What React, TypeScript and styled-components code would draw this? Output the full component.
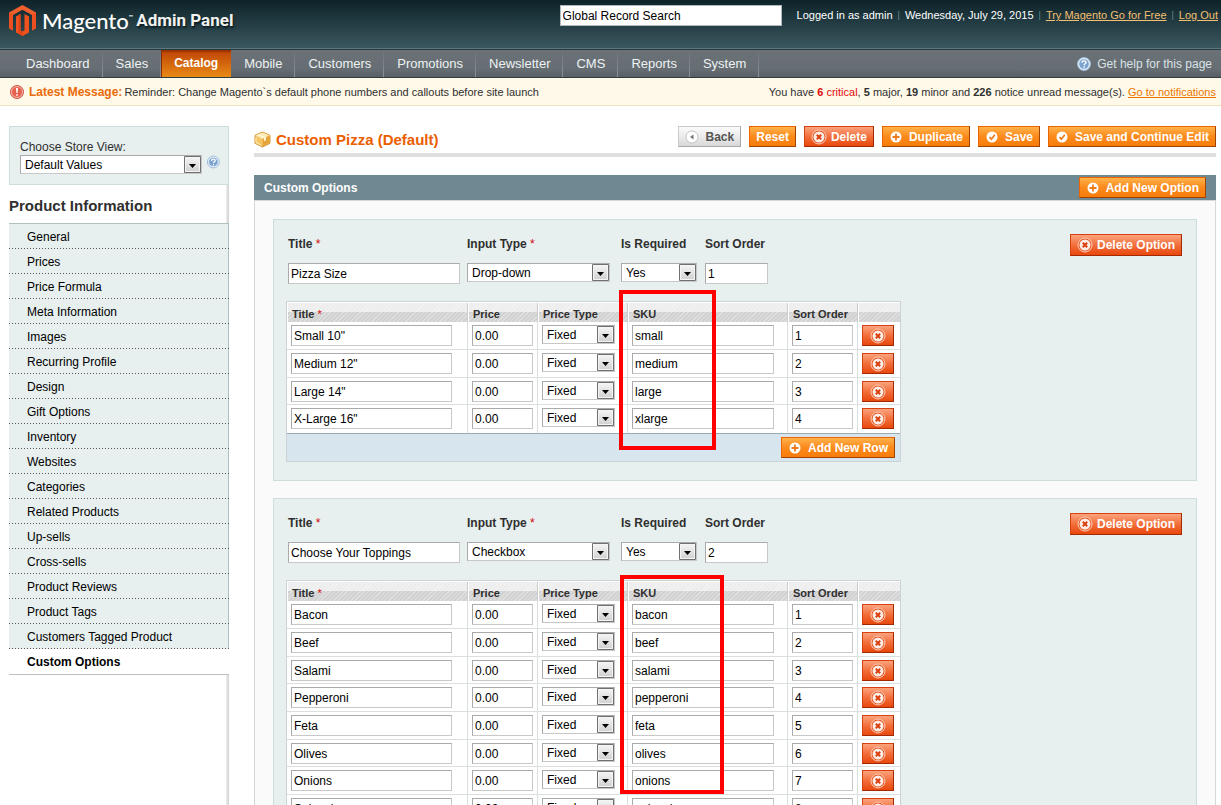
import React from "react";
import styled, { createGlobalStyle, css } from "styled-components";

const Global = createGlobalStyle`
  * { box-sizing: border-box; }
  html, body { margin: 0; padding: 0; }
  body {
    background: #fff;
    color: #2f2f2f;
    font: 12px/16px "Liberation Sans", Arial, Helvetica, sans-serif;
  }
  input, select, button { font: inherit; margin: 0; }
`;

const Page = styled.div`
  display: flex;
  flex-direction: column;
  height: 100vh;
  overflow: hidden;
`;

/* ---------- Header ---------- */
const Header = styled.header`
  display: flex;
  justify-content: space-between;
  align-items: flex-start;
  flex: 0 0 50px;
  padding: 5px 3px 0 9px;
  background: linear-gradient(#0d2329, #3c5860);
  border-bottom: 1px solid #27393f;
  box-shadow: inset 0 -1px 0 #5c7780;
`;
const Logo = styled.h1`
  display: flex;
  align-items: center;
  margin: 0;
  height: 31px;
  color: #fff;
  font-weight: normal;
`;
const Brand = styled.span`
  margin-left: 6px;
  font: 500 22px/31px Lato, sans-serif;
  sup { font-size: 6px; line-height: 6px; vertical-align: 10px; }
`;
const Product = styled.span`
  margin-left: 3px;
  font: bold 17px/31px Roboto, sans-serif;
  color: #f2f2f0;
  text-shadow: 1px 2px 2px #0a1a1f;
`;
const HeaderRight = styled.div`
  display: flex;
  align-items: flex-start;
  font-size: 11px;
  color: #fff;
`;
const Search = styled.input`
  width: 222px;
  height: 21px;
  margin-right: 15px;
  padding: 0 2px;
  border: 1px solid #b0b8bb;
  font-size: 12px;
  color: #000;
`;
const Account = styled.div`
  display: flex;
  line-height: 20px;
  a { color: #f3bf72; }
  > * + * { display: flex; }
  > * + *::before { content: "|"; margin: 0 5px; color: #6f8992; font-size: 9px; }
`;

/* ---------- Navigation ---------- */
const NavBar = styled.div`
  display: flex;
  justify-content: space-between;
  flex: 0 0 28px;
  padding: 0 9px 0 13px;
  background: linear-gradient(#6b7177, #666e73 70%, #5a6065);
  border-bottom: 1px solid #303c40;
`;
const Nav = styled.nav`
  display: flex;
`;
const NavLink = styled.a<{ $active?: boolean }>`
  padding: 0 13px;
  color: #eef2f3;
  font-size: 13px;
  line-height: 27px;
  text-decoration: none;
  background: linear-gradient(transparent, #8f969b) right / 1px 100% no-repeat;
  ${(p) => p.$active && css`
    font-size: 12px;
    font-weight: bold;
    color: #fff;
    background: linear-gradient(#8c2b00, #c24a06 3px, #e98a16);
    box-shadow: inset 1px 0 0 #8c2b00;
  `}
`;
const HelpLink = styled.a`
  display: flex;
  align-items: center;
  gap: 6px;
  color: #d9e2e6;
  text-decoration: none;
`;

/* ---------- Notification bar ---------- */
const Notice = styled.div`
  display: flex;
  justify-content: space-between;
  align-items: center;
  flex: 0 0 28px;
  padding: 0 5px 0 10px;
  background: #fff9e9;
  border-bottom: 1px solid #eee2be;
  font-size: 11px;
  a { color: #ea7601; }
`;
const Latest = styled.div`
  display: flex;
  align-items: center;
  b { margin: 0 2px 0 5px; font-size: 12px; color: #ea6b0a; }
`;
const Critical = styled.span`
  color: #df0a0a;
`;

/* ---------- Columns ---------- */
const Columns = styled.div`
  display: flex;
  flex: 1;
  min-height: 0;
  padding: 20px 5px 0 9px;
`;
const Sidebar = styled.aside`
  flex: 0 0 220px;
  margin-right: 25px;
  background: linear-gradient(to right, #f0f0f0, #d0d0d0) right / 3px 100% no-repeat;
`;
const StoreBox = styled.div`
  height: 59px;
  padding: 13px 8px 0 10px;
  border: 1px solid #cddddd;
  background: #e7efef;
`;
const StoreRow = styled.div`
  display: flex;
  gap: 5px;
`;
const StoreLabel = styled.label`
  display: block;
  line-height: 15px;
`;
const SideTitle = styled.h2`
  margin: 0 3px 0 0;
  height: 38px;
  font-size: 15px;
  line-height: 42px;
  background: #fff;
`;
const TabList = styled.ul`
  margin: 0;
  padding: 0;
  list-style: none;
  border-top: 1px solid #b0bfc0;
  border-bottom: 1px solid #bebebe;
`;
const Tab = styled.a<{ $active?: boolean }>`
  display: block;
  height: 25px;
  padding: 1px 0 0 18px;
  line-height: 25px;
  color: #000;
  text-decoration: none;
  background:
    linear-gradient(to right, #555 1px, transparent 1px) bottom left / 3px 1px repeat-x,
    linear-gradient(#a9c2c4, #a9c2c4) right / 1px 100% no-repeat,
    #e7efef;
  ${(p) => p.$active && css`
    font-weight: bold;
    background: #fff;
  `}
`;

/* ---------- Main ---------- */
const Main = styled.main`
  flex: 1;
  min-width: 0;
`;
const TitleBar = styled.div`
  display: flex;
  justify-content: space-between;
  align-items: flex-start;
  height: 31px;
  margin-bottom: 18px;
  border-bottom: 4px solid #dfdfdf;
`;
const Title = styled.h2`
  display: flex;
  align-items: center;
  gap: 5px;
  margin: 0;
  font-size: 15px;
  line-height: 27px;
  color: #eb5e00;
`;
const Buttons = styled.div`
  display: flex;
  gap: 8px;
`;
const tones = {
  add: ["#ffb24a", "#fb8a1c", "#f77c0a", "#ed6502", "#a04300", "#fff"],
  remove: ["#fba37d", "#f26f3b", "#e8480e", "#d74111", "#a22a03", "#fff"],
  back: ["#fbfbfb", "#ebebeb", "#d8d8d8", "#c9c9c9", "#a8a8a8", "#555"],
};
const Btn = styled.button<{ $tone?: keyof typeof tones }>`
  display: inline-flex;
  align-items: center;
  gap: 4px;
  height: 21px;
  padding: 0 6px;
  white-space: nowrap;
  font-weight: bold;
  ${(p) => {
    const t = tones[p.$tone ?? "add"];
    return css`
      color: ${t[5]};
      background: linear-gradient(${t[0]}, ${t[1]} 50%, ${t[2]});
      border: 1px solid;
      border-color: ${t[3]} ${t[4]} ${t[4]} ${t[3]};
    `;
  }}
`;
const DeleteOption = styled(Btn)`
  height: 22px;
`;
const IconBtn = styled(Btn)`
  display: flex;
  justify-content: center;
  width: 32px;
  padding: 0;
`;
const PanelHead = styled.div`
  display: flex;
  justify-content: space-between;
  align-items: center;
  height: 25px;
  padding: 0 10px;
  background: #6f8992;
  color: #fff;
  h3 { margin: 0; font-size: 12px; }
`;
const Panel = styled.div`
  display: flex;
  flex-direction: column;
  gap: 17px;
  padding: 18px;
  border: 1px solid #d6d6d6;
  background: #fafafa;
`;
const Option = styled.section`
  padding: 14px 14px 18px 12px;
  border: 1px solid #cddddd;
  background: #e7efef;
`;
const OptionHead = styled.div`
  display: flex;
  justify-content: space-between;
  align-items: flex-start;
  padding-left: 2px;
  margin-bottom: 17px;
`;
const Fields = styled.div`
  display: flex;
`;
const Field = styled.div<{ $w: number; $gap: number }>`
  width: ${(p) => p.$w}px;
  margin-right: ${(p) => p.$gap}px;
  label {
    display: block;
    margin-bottom: 9px;
    line-height: 20px;
    font-weight: bold;
    white-space: nowrap;
  }
`;
const Star = styled.span`
  color: #d40707;
  font-weight: normal;
`;
const TextBox = styled.input`
  display: block;
  width: 100%;
  height: 21px;
  padding: 0 2px;
  border: 1px solid;
  border-color: #aaa #c8c8c8 #c8c8c8 #aaa;
  border-radius: 0;
  background: #fff;
  color: #000;
`;
const SelectWrap = styled.span`
  position: relative;
  display: block;
  width: 100%;
  svg { position: absolute; right: 1px; top: 1px; pointer-events: none; }
`;
const NativeSelect = styled.select`
  appearance: none;
  display: block;
  width: 100%;
  height: 19px;
  padding: 0 18px 0 4px;
  border: 1px solid;
  border-color: #aaa #c8c8c8 #c8c8c8 #aaa;
  border-radius: 0;
  background: #fff;
  color: #000;
`;

/* ---------- Value grid ---------- */
const GridWrap = styled.div`
  position: relative;
  width: 615px;
`;
const Grid = styled.table`
  width: 100%;
  table-layout: fixed;
  border-collapse: separate;
  border-spacing: 0;
  border: 1px solid #cbd3d4;
  background: #fff;
  th {
    height: 20px;
    padding: 2px 0 0 4px;
    font-size: 11px;
    line-height: 16px;
    text-align: left;
    border: solid #fff;
    border-width: 1px 0 0 1px;
    box-shadow: inset -1px 0 0 #c8cccd;
    background:
      linear-gradient(#fff9 50%, transparent 50%),
      repeating-linear-gradient(135deg, #dfdfdf 0 1px, #d2d2d2 1px 3px);
  }
  td {
    height: 28px;
    padding: 3px 0 0 4px;
    vertical-align: top;
    border: solid #dadfe0;
    border-width: 0 1px 1px 0;
  }
  th:last-child, td:last-child { border-right: 0; box-shadow: none; }
  tbody tr:nth-child(3n) td { height: 27px; }
  tfoot td {
    height: 28px;
    padding: 3px 5px 0;
    border: 0;
    border-top: 1px solid #9babb0;
    background: #d7e5ef;
  }
  tbody tr:last-child td { border-bottom: 0; }
`;
const Cell = styled.div<{ $w: number }>`
  width: ${(p) => p.$w}px;
`;
const FootRight = styled.div`
  display: flex;
  justify-content: flex-end;
`;
const Highlight = styled.div<{ $x: number; $y: number; $w: number; $h: number }>`
  position: absolute;
  left: ${(p) => p.$x}px;
  top: ${(p) => p.$y}px;
  width: ${(p) => p.$w}px;
  height: ${(p) => p.$h}px;
  border: 4px solid #fe0000;
  pointer-events: none;
`;

/* ---------- Icons ---------- */
const MagentoMark = () => (
  <svg width="27" height="31" viewBox="0 0 27 31" aria-hidden="true">
    <path d="M13.5 0 27 7.6v15.6l-4 2.3V10L13.5 4.7 4 10v15.5l-4-2.3V7.6z" fill="#f1602c" />
    <path d="M0 7.6 4 10v15.5l-4-2.3zM27 7.6 23 10v15.500l4-2.300z" fill="#ee4f20" />
    <path d="M7 11.500 11.500 9v16.200l2 1.200 2-1.200V9l4.500 2.500v16L13.500 31 7 27.500z" fill="#f1501f" />
    <path d="M9.500 10.100 11.500 9v16.200l2 1.200V31l-4-2.200z" fill="#e04417" />
  </svg>
);
const AlertIcon = () => (
  <svg width="14" height="14" viewBox="0 0 14 14" aria-hidden="true">
    <circle cx="7" cy="7" r="6.500" fill="#e5604d" stroke="#cf5a4b" />
    <circle cx="7" cy="7" r="5.500" fill="none" stroke="#f6b8ae" />
    <path d="M6 3h2l-.4 5H6.400zM6.200 9.200h1.600v1.600H6.200z" fill="#fff" />
  </svg>
);
const HelpIcon = () => (
  <svg width="14" height="14" viewBox="0 0 14 14" aria-hidden="true">
    <circle cx="7" cy="7" r="6.500" fill="#e4eff9" stroke="#9ab8d6" />
    <circle cx="7" cy="7" r="4.800" fill="#7aa3cf" />
    <path d="M5 5.800C5 3.200 9.100 3.400 9 5.500 8.900 6.800 7.100 6.700 7.100 8.200M7.100 9.300v1.500" fill="none" stroke="#fff" strokeWidth="1.400" />
  </svg>
);
const BoxIcon = () => (
  <svg width="17" height="17" viewBox="0 0 17 17" aria-hidden="true">
    <path d="M8.500 1 16 4.300v8L8.500 16 1 12.300v-8z" fill="#f5c564" stroke="#d69a3c" />
    <path d="M8.500 1.500 15.500 4.500 8.500 8 1.500 4.500z" fill="#fce8b4" />
    <path d="M8.500 8v7.500l7-3.500V4.500z" fill="#e5a53a" />
    <path d="M5 3 12 6.300v3l-2 1V7.200L3.200 4z" fill="#fff4d4" />
    <path d="M2 6.500v5l5 2.500" fill="none" stroke="#fff0c4" />
  </svg>
);
const DropArrow = () => (
  <svg width="17" height="17" viewBox="0 0 17 17" aria-hidden="true">
    <defs>
      <linearGradient id="arrowFace" x2="0" y2="1">
        <stop stopColor="#f6f6f6" />
        <stop offset="1" stopColor="#cfcfcf" />
      </linearGradient>
    </defs>
    <path d="M.5.5h16v16H.5z" fill="url(#arrowFace)" stroke="#707070" />
    <path d="M1.500 1.500h14v14h-14z" fill="none" stroke="#f4f4f4" />
    <path d="M5 8h7l-3.500 4z" fill="#000" />
  </svg>
);
const CrossIcon = () => (
  <svg width="16" height="16" viewBox="0 0 16 16" aria-hidden="true">
    <circle cx="8" cy="8" r="7" fill="#e8551f" stroke="#fbd0bd" />
    <circle cx="8" cy="8" r="5.500" fill="#fdeee8" />
    <path d="M5.800 5.800l4.400 4.400M10.200 5.800l-4.400 4.400" stroke="#d9400e" strokeWidth="2" />
  </svg>
);
const PlusIcon = () => (
  <svg width="16" height="16" viewBox="0 0 16 16" aria-hidden="true">
    <circle cx="7" cy="8" r="5.500" fill="#fff" />
    <path d="M7 4.500v7M3.500 8h7" stroke="#f07a18" strokeWidth="1.800" />
  </svg>
);
const CheckIcon = () => (
  <svg width="16" height="16" viewBox="0 0 16 16" aria-hidden="true">
    <circle cx="7" cy="8" r="5.500" fill="#fff" />
    <path d="M4.500 8.200l1.900 2L9.800 5.800" fill="none" stroke="#f07a18" strokeWidth="1.700" />
  </svg>
);
const BackIcon = () => (
  <svg width="17" height="14" viewBox="0 0 17 14" aria-hidden="true">
    <circle cx="7" cy="7" r="6" fill="#fff" stroke="#c4c4c4" />
    <path d="M8.500 4.500v5L5 7z" fill="#777" />
  </svg>
);

/* ---------- Data ---------- */
const navItems = ["Dashboard", "Sales", "Catalog", "Mobile", "Customers", "Promotions", "Newsletter", "CMS", "Reports", "System"];
const tabs = [
  "General", "Prices", "Price Formula", "Meta Information", "Images", "Recurring Profile",
  "Design", "Gift Options", "Inventory", "Websites", "Categories", "Related Products",
  "Up-sells", "Cross-sells", "Product Reviews", "Product Tags", "Customers Tagged Product", "Custom Options",
];

type OptionData = {
  title: string;
  type: string;
  order: string;
  rows: [string, string][];
  mark: [number, number, number, number];
};
const options: OptionData[] = [
  {
    title: "Pizza Size", type: "Drop-down", order: "1",
    rows: [['Small 10"', "small"], ['Medium 12"', "medium"], ['Large 14"', "large"], ['X-Large 16"', "xlarge"]],
    mark: [333, -11, 97, 160],
  },
  {
    title: "Choose Your Toppings", type: "Checkbox", order: "2",
    rows: [
      ["Bacon", "bacon"], ["Beef", "beef"], ["Salami", "salami"], ["Pepperoni", "pepperoni"],
      ["Feta", "feta"], ["Olives", "olives"], ["Onions", "onions"], ["Spinach", "spinach"],
    ],
    mark: [334, -5, 104, 219],
  },
];

type SelectProps = { id?: string; label?: string; value: string };
const Select = ({ id, label, value }: SelectProps) => (
  <SelectWrap>
    <NativeSelect id={id} aria-label={label} defaultValue={value}>
      <option>{value}</option>
    </NativeSelect>
    <DropArrow />
  </SelectWrap>
);

const OptionBlock = ({ data }: { data: OptionData }) => {
  const id = `option-${data.order}`;
  return (
    <Option>
      <OptionHead>
        <Fields>
          <Field $w={172} $gap={7}>
            <label htmlFor={`${id}-title`}>Title <Star>*</Star></label>
            <TextBox id={`${id}-title`} defaultValue={data.title} />
          </Field>
          <Field $w={143} $gap={11}>
            <label htmlFor={`${id}-type`}>Input Type <Star>*</Star></label>
            <Select id={`${id}-type`} value={data.type} />
          </Field>
          <Field $w={76} $gap={8}>
            <label htmlFor={`${id}-required`}>Is Required</label>
            <Select id={`${id}-required`} value="Yes" />
          </Field>
          <Field $w={63} $gap={0}>
            <label htmlFor={`${id}-order`}>Sort Order</label>
            <TextBox id={`${id}-order`} defaultValue={data.order} />
          </Field>
        </Fields>
        <DeleteOption $tone="remove" type="button"><CrossIcon />Delete Option</DeleteOption>
      </OptionHead>
      <GridWrap>
        <Grid>
          <colgroup>
            <col width="181" /><col width="70" /><col width="90" />
            <col width="160" /><col width="70" /><col />
          </colgroup>
          <thead>
            <tr>
              <th>Title <Star>*</Star></th>
              <th>Price</th>
              <th>Price Type</th>
              <th>SKU</th>
              <th>Sort Order</th>
              <th aria-label="Actions" />
            </tr>
          </thead>
          <tbody>
            {data.rows.map(([name, sku], i) => (
              <tr key={sku}>
                <td><Cell $w={161}><TextBox aria-label="Title" defaultValue={name} /></Cell></td>
                <td><Cell $w={61}><TextBox aria-label="Price" defaultValue="0.00" /></Cell></td>
                <td><Cell $w={73}><Select label="Price Type" value="Fixed" /></Cell></td>
                <td><Cell $w={142}><TextBox aria-label="SKU" defaultValue={sku} /></Cell></td>
                <td><Cell $w={61}><TextBox aria-label="Sort Order" defaultValue={String(i + 1)} /></Cell></td>
                <td><IconBtn $tone="remove" type="button" aria-label="Delete row"><CrossIcon /></IconBtn></td>
              </tr>
            ))}
          </tbody>
          <tfoot>
            <tr>
              <td colSpan={6}>
                <FootRight><Btn type="button"><PlusIcon />Add New Row</Btn></FootRight>
              </td>
            </tr>
          </tfoot>
        </Grid>
        <Highlight $x={data.mark[0]} $y={data.mark[1]} $w={data.mark[2]} $h={data.mark[3]} />
      </GridWrap>
    </Option>
  );
};

export default function App() {
  return (
    <Page>
      <Global />
      <Header>
        <Logo>
          <MagentoMark />
          <Brand>Magento<sup>™</sup></Brand>
          <Product>Admin Panel</Product>
        </Logo>
        <HeaderRight>
          <Search aria-label="Global Record Search" defaultValue="Global Record Search" />
          <Account>
            <span>Logged in as admin</span>
            <span>Wednesday, July 29, 2015</span>
            <span><a href="#try">Try Magento Go for Free</a></span>
            <span><a href="#logout">Log Out</a></span>
          </Account>
        </HeaderRight>
      </Header>
      <NavBar>
        <Nav>
          {navItems.map((n) => (
            <NavLink key={n} href="#nav" $active={n === "Catalog"}>{n}</NavLink>
          ))}
        </Nav>
        <HelpLink href="#help"><HelpIcon />Get help for this page</HelpLink>
      </NavBar>
      <Notice>
        <Latest>
          <AlertIcon />
          <b>Latest Message:</b>
          <span>Reminder: Change Magento`s default phone numbers and callouts before site launch</span>
        </Latest>
        <div>
          You have <Critical><b>6</b> critical</Critical>, <b>5</b> major, <b>19</b> minor and <b>226</b> notice unread message(s). <a href="#notifications">Go to notifications</a>
        </div>
      </Notice>
      <Columns>
        <Sidebar>
          <StoreBox>
            <StoreLabel htmlFor="store-view">Choose Store View:</StoreLabel>
            <StoreRow>
              <Select id="store-view" value="Default Values" />
              <HelpIcon />
            </StoreRow>
          </StoreBox>
          <SideTitle>Product Information</SideTitle>
          <TabList>
            {tabs.map((t) => (
              <li key={t}><Tab href="#tab" $active={t === "Custom Options"}>{t}</Tab></li>
            ))}
          </TabList>
        </Sidebar>
        <Main>
          <TitleBar>
            <Title><BoxIcon />Custom Pizza (Default)</Title>
            <Buttons>
              <Btn $tone="back" type="button"><BackIcon />Back</Btn>
              <Btn type="button">Reset</Btn>
              <Btn $tone="remove" type="button"><CrossIcon />Delete</Btn>
              <Btn type="button"><PlusIcon />Duplicate</Btn>
              <Btn type="button"><CheckIcon />Save</Btn>
              <Btn type="button"><CheckIcon />Save and Continue Edit</Btn>
            </Buttons>
          </TitleBar>
          <PanelHead>
            <h3>Custom Options</h3>
            <Btn type="button"><PlusIcon />Add New Option</Btn>
          </PanelHead>
          <Panel>
            {options.map((o) => <OptionBlock key={o.order} data={o} />)}
          </Panel>
        </Main>
      </Columns>
    </Page>
  );
}
